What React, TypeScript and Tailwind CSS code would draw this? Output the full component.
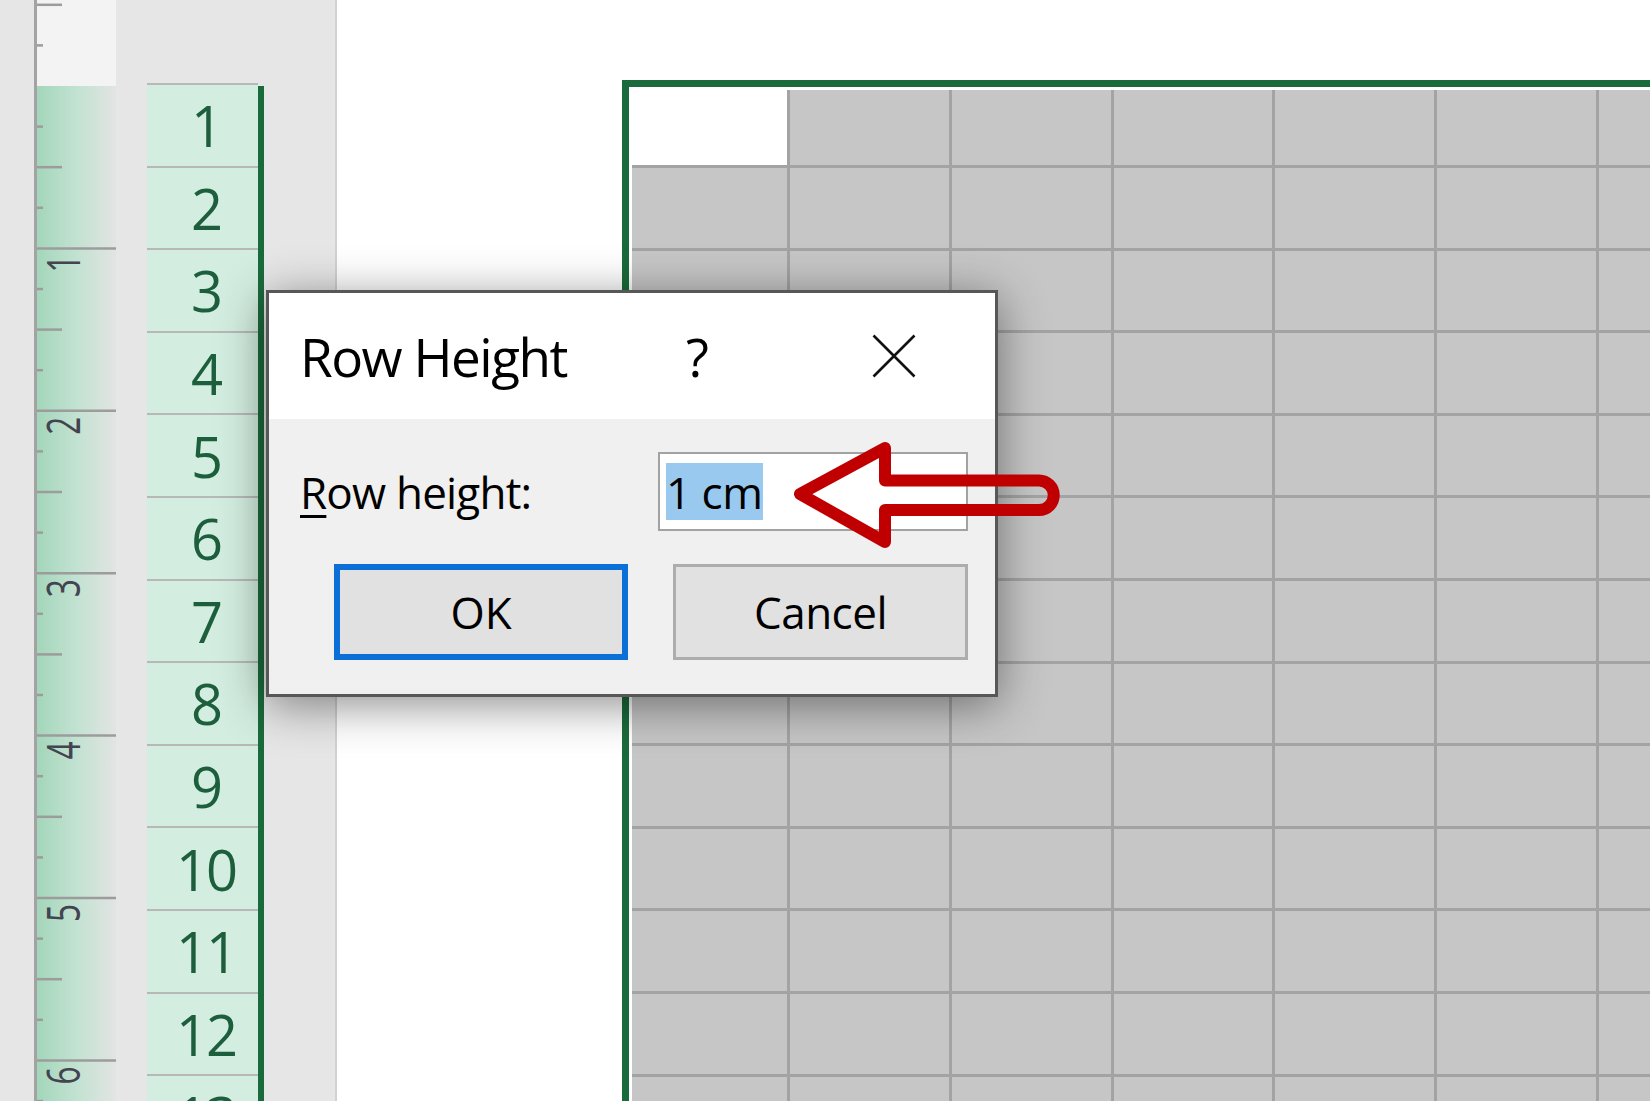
import React from 'react';

const CM = 162.4;
const RULER_TOP = 86;

const Ruler: React.FC = () => {
    const majors = [1, 2, 3, 4, 5, 6];
    const halves = [-1, 0, 1, 2, 3, 4, 5, 6];
    return (
        <div className="relative w-[79px] h-full flex flex-col">
            <div className="h-[86px] bg-[#f3f3f3]" />
            <div className="flex-1 bg-linear-to-r from-[#a3d6bb] via-[#c2e2d1] to-[#e2e4e3]" />
            <svg className="absolute inset-0" width="79" height="1101">
                {majors.map((n) => {
                    const y = RULER_TOP + n * CM;
                    return (
                        <g key={n}>
                            <line x1="0" x2="79" y1={y} y2={y} stroke="#9c9c9c" strokeWidth="2.5" />
                            <text
                                transform={`translate(43 ${y + 15}) rotate(-90) scale(0.7 1)`}
                                textAnchor="middle"
                                fontFamily="'Open Sans', sans-serif"
                                fontSize="45"
                                fill="#444450"
                            >
                                {n}
                            </text>
                        </g>
                    );
                })}
                {halves.map((n) => {
                    const y = RULER_TOP + (n + 0.5) * CM;
                    const q1 = RULER_TOP + (n + 0.25) * CM;
                    const q2 = RULER_TOP + (n + 0.75) * CM;
                    return (
                        <g key={n} stroke="#9c9c9c" strokeWidth="2.5">
                            <line x1="0" x2="25" y1={y} y2={y} />
                            <line x1="0" x2="6" y1={q1} y2={q1} />
                            <line x1="0" x2="6" y1={q2} y2={q2} />
                        </g>
                    );
                })}
            </svg>
        </div>
    );
};

const RowHeaders: React.FC = () => {
    const rows = Array.from({ length: 13 }, (_, i) => i + 1);
    return (
        <div className="w-[111px] h-full flex flex-col">
            <div className="h-[83px] shrink-0 bg-[#e6e6e6]" />
            <div className="border-t-2 border-[#b8b8b8] flex flex-col">
                {rows.map((r) => (
                    <div
                        key={r}
                        className="h-[82.6px] shrink-0 border-b-2 border-[#b8b8b8] bg-[#d3eee0] flex items-center justify-center pl-[7px] text-[56px] leading-none tracking-[-2px] text-[#1d5f3c]"
                    >
                        {r}
                    </div>
                ))}
            </div>
        </div>
    );
};

const Sheet: React.FC = () => {
    const cells = Array.from({ length: 14 * 8 }, (_, i) => i);
    return (
        <div className="border-l-[7px] border-t-[7px] border-[#1a6b3b] pl-[3px] pt-[3px] bg-white w-[1100px]">
            <div className="grid grid-cols-[155px_repeat(7,158.8px)] grid-rows-[75px] auto-rows-[79.6px] gap-[3px] bg-[#a3a3a3]">
                {cells.map((i) => (
                    <div key={i} className={i === 0 ? 'bg-white' : 'bg-[#c6c6c6]'} />
                ))}
            </div>
        </div>
    );
};

const RowHeightDialog: React.FC = () => {
    return (
        <div className="absolute left-[266px] top-[290px] w-[732px] h-[407px] border-[3px] border-[#575757] bg-[#f0f0f0] flex flex-col shadow-[0_8px_44px_rgba(0,0,0,0.45)] text-black">
            {/* Title bar */}
            <div className="h-[126px] shrink-0 bg-white flex items-center pl-[31px]">
                <span className="w-[386px] text-[53px] leading-none tracking-[-1.5px]">Row Height</span>
                <span className="w-[186px] text-[53px] leading-none">?</span>
                <svg width="44" height="44" viewBox="0 0 44 44">
                    <path d="M1.5 1.5L42.5 42.5M42.5 1.5L1.5 42.5" stroke="#111" strokeWidth="2.6" fill="none" />
                </svg>
            </div>

            {/* Body */}
            <div className="flex-1 flex flex-col pl-[31px] pt-[33px]">
                <div className="flex items-center">
                    <span className="w-[358px] text-[44px] leading-none tracking-[-0.8px]">
                        <span className="underline decoration-[3px] underline-offset-[6px]">R</span>ow height:
                    </span>
                    <div className="w-[310px] h-[79px] border-2 border-[#a2a2a2] bg-white flex items-center pl-[6px]">
                        <span className="h-[57px] bg-[#99c9ef] flex items-center text-[44px] leading-none tracking-[-0.5px] pr-[1px]">
                            1 cm
                        </span>
                    </div>
                </div>
                <div className="flex gap-[45px] ml-[34px] mt-[33px]">
                    <button className="w-[294px] h-[96px] border-[6px] border-[#0a6fd6] bg-[#e1e1e1] flex items-center justify-center text-[44px] leading-none">
                        OK
                    </button>
                    <button className="w-[295px] h-[96px] border-[3px] border-[#adadad] bg-[#e1e1e1] flex items-center justify-center text-[44px] leading-none tracking-[-0.5px]">
                        Cancel
                    </button>
                </div>
            </div>
        </div>
    );
};

const App: React.FC = () => {
    return (
        <div className="relative w-[1650px] h-[1101px] overflow-hidden flex bg-white font-['Open_Sans',sans-serif]">
            {/* Left edge + vertical ruler */}
            <div className="w-[37px] shrink-0 bg-[#e6e6e6] border-r-[3px] border-[#a3a3a3]" />
            <Ruler />
            <div className="w-[31px] shrink-0 bg-[#e6e6e6]" />

            {/* Row headers with selection marker */}
            <RowHeaders />
            <div className="w-[6px] shrink-0 flex flex-col">
                <div className="h-[86px] bg-[#e6e6e6]" />
                <div className="flex-1 bg-[#1a6b3b]" />
            </div>
            <div className="w-[71px] shrink-0 bg-[#e6e6e6]" />
            <div className="w-[2px] shrink-0 bg-[#d2d2d2]" />

            {/* Page */}
            <div className="flex-1 bg-white pl-[285px] pt-[80px] overflow-hidden">
                <Sheet />
            </div>

            <RowHeightDialog />

            {/* Red annotation arrow */}
            <svg className="absolute left-[780px] top-[430px]" width="300" height="130" viewBox="0 0 300 130">
                <path
                    d="M20 64 L105 18 L105 50.5 L259 50.5 A14.75 14.75 0 0 1 259 80 L105 80 L105 112 Z"
                    fill="none"
                    stroke="#c00000"
                    strokeWidth="12"
                    strokeLinejoin="round"
                />
            </svg>
        </div>
    );
};

export default App;
